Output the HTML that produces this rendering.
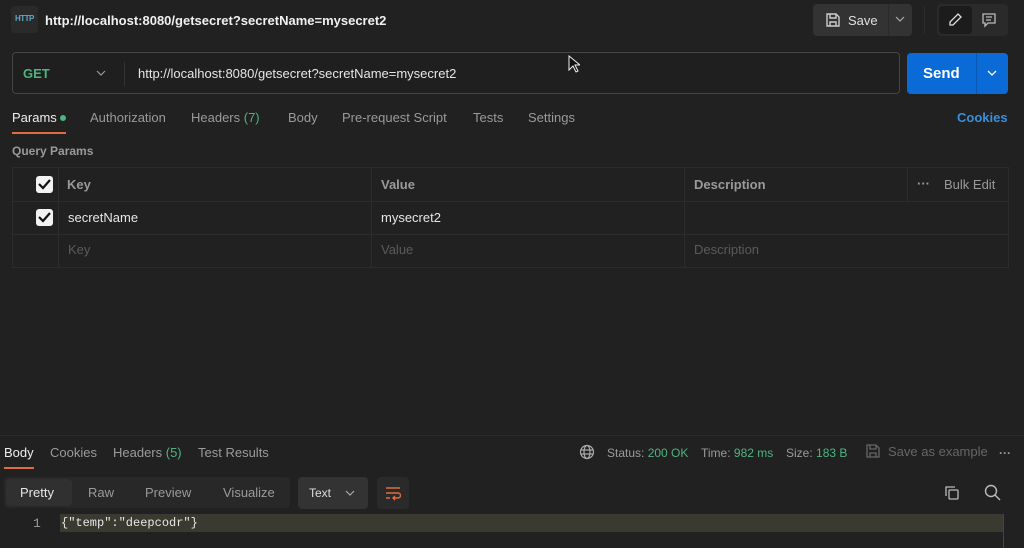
<!DOCTYPE html>
<html><head><style>
*{box-sizing:border-box;margin:0;padding:0}
body{width:1024px;height:548px;background:#212121;font-family:"Liberation Sans",sans-serif;color:#e6e6e6;position:relative;overflow:hidden;font-size:13px}
.a{position:absolute;white-space:nowrap}
.g{color:#9a9a9a}
.gr{color:#4fb37e}
.cb{position:absolute;width:17px;height:17px;background:#f2f2f2;border-radius:3px}
.cb svg{position:absolute;left:2px;top:3px}
</style></head><body>
<div class="a" style="left:11px;top:6px;width:27px;height:27px;background:#2a2a2a;border-radius:4px"></div>
<div class="a" style="left:15px;top:14px;font-size:8px;font-weight:bold;color:#5fa8c8;letter-spacing:-.5px">HTTP</div>
<div class="a" style="left:45px;top:13px;font-size:13px;font-weight:bold;color:#f0f0f0">http://localhost:8080/getsecret?secretName=mysecret2</div>
<div class="a" style="left:813px;top:4px;width:99px;height:32px;background:#333;border-radius:4px"></div>
<div class="a" style="left:888px;top:4px;width:1px;height:32px;background:#2a2a2a"></div>
<svg class="a" style="left:825px;top:12px" width="16" height="16" viewBox="0 0 16 16" fill="none" stroke="#ccc" stroke-width="1.4"><path d="M2 2h9l3 3v9H2z"/><path d="M5 2v4h6V2M5 14v-4h6v4"/></svg>
<div class="a" style="left:848px;top:13px;color:#e0e0e0">Save</div>
<svg class="a" style="left:895px;top:16px" width="10" height="7"><path d="M1 1l4 4 4-4" stroke="#aaa" fill="none" stroke-width="1.2"/></svg>
<div class="a" style="left:924px;top:6px;width:1px;height:28px;background:#2e2e2e"></div>
<div class="a" style="left:937px;top:4px;width:71px;height:32px;background:#2a2a2a;border-radius:4px"></div>
<div class="a" style="left:939px;top:6px;width:33px;height:28px;background:#1c1c1c;border-radius:4px"></div>
<svg class="a" style="left:947px;top:12px" width="16" height="16" fill="none" stroke="#ddd" stroke-width="1.3"><path d="M11 2l3 3-8 8H3v-3z"/></svg>
<svg class="a" style="left:981px;top:12px" width="16" height="16" fill="none" stroke="#bbb" stroke-width="1.3"><path d="M2 2h12v9H7l-3 3v-3H2z M5 5h6M5 8h5"/></svg>
<div class="a" style="left:12px;top:52px;width:888px;height:42px;border:1px solid #454545;border-radius:4px;background:#1f1f1f"></div>
<div class="a" style="left:124px;top:62px;width:1px;height:24px;background:#333"></div>
<div class="a gr" style="left:23px;top:66px;font-weight:bold">GET</div>
<svg class="a" style="left:96px;top:70px" width="10" height="7"><path d="M1 1l4 4 4-4" stroke="#999" fill="none" stroke-width="1.2"/></svg>
<div class="a" style="left:138px;top:66px;color:#e6e6e6">http://localhost:8080/getsecret?secretName=mysecret2</div>
<svg class="a" style="left:568px;top:55px" width="12" height="19"><path d="M1 1v14l4-4 3 6 2-1-3-6h5z" fill="#111" stroke="#eee" stroke-width="1"/></svg>
<div class="a" style="left:907px;top:53px;width:101px;height:41px;background:#0b6bd6;border-radius:4px"></div>
<div class="a" style="left:976px;top:53px;width:1px;height:41px;background:#0a5ab5"></div>
<div class="a" style="left:923px;top:65px;font-size:15px;font-weight:bold;color:#fff">Send</div>
<svg class="a" style="left:987px;top:70px" width="10" height="7"><path d="M1 1l4 4 4-4" stroke="#fff" fill="none" stroke-width="1.3"/></svg>
<div class="a" style="left:12px;top:110px;color:#eee">Params</div>
<div class="a" style="left:60px;top:115px;width:6px;height:6px;border-radius:3px;background:#4fb37e"></div>
<div class="a" style="left:12px;top:132px;width:54px;height:2px;background:#e06c3c"></div>
<div class="a g" style="left:90px;top:110px">Authorization</div>
<div class="a g" style="left:191px;top:110px">Headers <span class="gr">(7)</span></div>
<div class="a g" style="left:288px;top:110px">Body</div>
<div class="a g" style="left:342px;top:110px">Pre-request Script</div>
<div class="a g" style="left:473px;top:110px">Tests</div>
<div class="a g" style="left:528px;top:110px">Settings</div>
<div class="a" style="left:957px;top:110px;color:#3a8fdc;font-weight:bold">Cookies</div>
<div class="a g" style="left:12px;top:144px;font-weight:bold;font-size:12px">Query Params</div>
<div class="a" style="left:12px;top:167px;width:997px;height:101px;border:1px solid #2c2c2c"></div>
<div class="a" style="left:12px;top:201px;width:997px;height:1px;background:#2c2c2c"></div>
<div class="a" style="left:12px;top:234px;width:997px;height:1px;background:#2c2c2c"></div>
<div class="a" style="left:58px;top:167px;width:1px;height:101px;background:#2c2c2c"></div>
<div class="a" style="left:371px;top:167px;width:1px;height:101px;background:#2c2c2c"></div>
<div class="a" style="left:684px;top:167px;width:1px;height:101px;background:#2c2c2c"></div>
<div class="a" style="left:907px;top:167px;width:1px;height:34px;background:#2c2c2c"></div>
<div class="cb" style="left:36px;top:176px"><svg width="13" height="11"><path d="M1 5l4 4 7-8" stroke="#111" stroke-width="2.2" fill="none"/></svg></div>
<div class="cb" style="left:36px;top:209px"><svg width="13" height="11"><path d="M1 5l4 4 7-8" stroke="#111" stroke-width="2.2" fill="none"/></svg></div>
<div class="a g" style="left:67px;top:177px;font-weight:bold">Key</div>
<div class="a g" style="left:381px;top:177px;font-weight:bold">Value</div>
<div class="a g" style="left:694px;top:177px;font-weight:bold">Description</div>
<div class="a g" style="left:917px;top:180px;font-weight:bold;line-height:8px">···</div>
<div class="a g" style="left:944px;top:177px">Bulk Edit</div>
<div class="a" style="left:68px;top:210px">secretName</div>
<div class="a" style="left:381px;top:210px">mysecret2</div>
<div class="a" style="left:68px;top:242px;color:#5a5a5a">Key</div>
<div class="a" style="left:381px;top:242px;color:#5a5a5a">Value</div>
<div class="a" style="left:694px;top:242px;color:#5a5a5a">Description</div>
<div class="a" style="left:0;top:435px;width:1024px;height:1px;background:#2c2c2c"></div>
<div class="a" style="left:4px;top:445px;color:#eee">Body</div>
<div class="a" style="left:4px;top:467px;width:30px;height:2px;background:#e06c3c"></div>
<div class="a g" style="left:50px;top:445px">Cookies</div>
<div class="a g" style="left:113px;top:445px">Headers <span class="gr">(5)</span></div>
<div class="a g" style="left:198px;top:445px">Test Results</div>
<svg class="a" style="left:579px;top:444px" width="16" height="16" fill="none" stroke="#aaa" stroke-width="1.2"><circle cx="8" cy="8" r="6.5"/><ellipse cx="8" cy="8" rx="3" ry="6.5"/><path d="M2 6h12M2 10h12"/></svg>
<div class="a g" style="left:607px;top:446px;font-size:12px">Status: <span class="gr">200 OK</span></div>
<div class="a g" style="left:701px;top:446px;font-size:12px">Time: <span class="gr">982 ms</span></div>
<div class="a g" style="left:786px;top:446px;font-size:12px">Size: <span class="gr">183 B</span></div>
<svg class="a" style="left:865px;top:443px" width="16" height="16" fill="none" stroke="#666" stroke-width="1.3"><path d="M2 2h9l3 3v9H2z"/><path d="M5 2v4h6V2M5 14v-4h6v4"/></svg>
<div class="a" style="left:888px;top:444px;color:#666">Save as example</div>
<div class="a g" style="left:999px;top:449px;font-size:12px;font-weight:bold;line-height:8px">···</div>
<div class="a" style="left:4px;top:477px;width:286px;height:31px;background:#282828;border-radius:4px"></div>
<div class="a" style="left:6px;top:479px;width:66px;height:27px;background:#303030;border-radius:4px"></div>
<div class="a" style="left:20px;top:485px;color:#e6e6e6">Pretty</div>
<div class="a g" style="left:88px;top:485px">Raw</div>
<div class="a g" style="left:145px;top:485px">Preview</div>
<div class="a g" style="left:223px;top:485px">Visualize</div>
<div class="a" style="left:298px;top:477px;width:70px;height:32px;background:#333;border-radius:4px"></div>
<div class="a" style="left:309px;top:486px;font-size:12px;color:#ddd">Text</div>
<svg class="a" style="left:345px;top:490px" width="10" height="7"><path d="M1 1l4 4 4-4" stroke="#aaa" fill="none" stroke-width="1.2"/></svg>
<div class="a" style="left:377px;top:477px;width:32px;height:32px;background:#2a2a2a;border-radius:4px"></div>
<svg class="a" style="left:385px;top:485px" width="16" height="16" fill="none" stroke="#e06c3c" stroke-width="1.4"><path d="M1 3h14M1 8h12a2.5 2.5 0 010 5H8M10 11l-2 2 2 2M1 13h4"/></svg>
<svg class="a" style="left:944px;top:485px" width="16" height="16" fill="none" stroke="#bbb" stroke-width="1.3"><rect x="5" y="5" width="9" height="9" rx="1"/><path d="M2 11V2h9"/></svg>
<svg class="a" style="left:984px;top:484px" width="17" height="17" fill="none" stroke="#bbb" stroke-width="1.4"><circle cx="7" cy="7" r="5.5"/><path d="M11 11l5 5"/></svg>
<div class="a" style="left:60px;top:514px;width:944px;height:18px;background:#3b3a31"></div>
<div class="a" style="left:1003px;top:514px;width:1px;height:34px;background:#444"></div>
<div class="a g" style="left:33px;top:516px;font-family:'Liberation Mono',monospace;font-size:13px">1</div>
<div class="a" style="left:61px;top:516px;font-family:'Liberation Mono',monospace;font-size:12px;color:#e6e6e6">{"temp":"deepcodr"}</div>
</body></html>
